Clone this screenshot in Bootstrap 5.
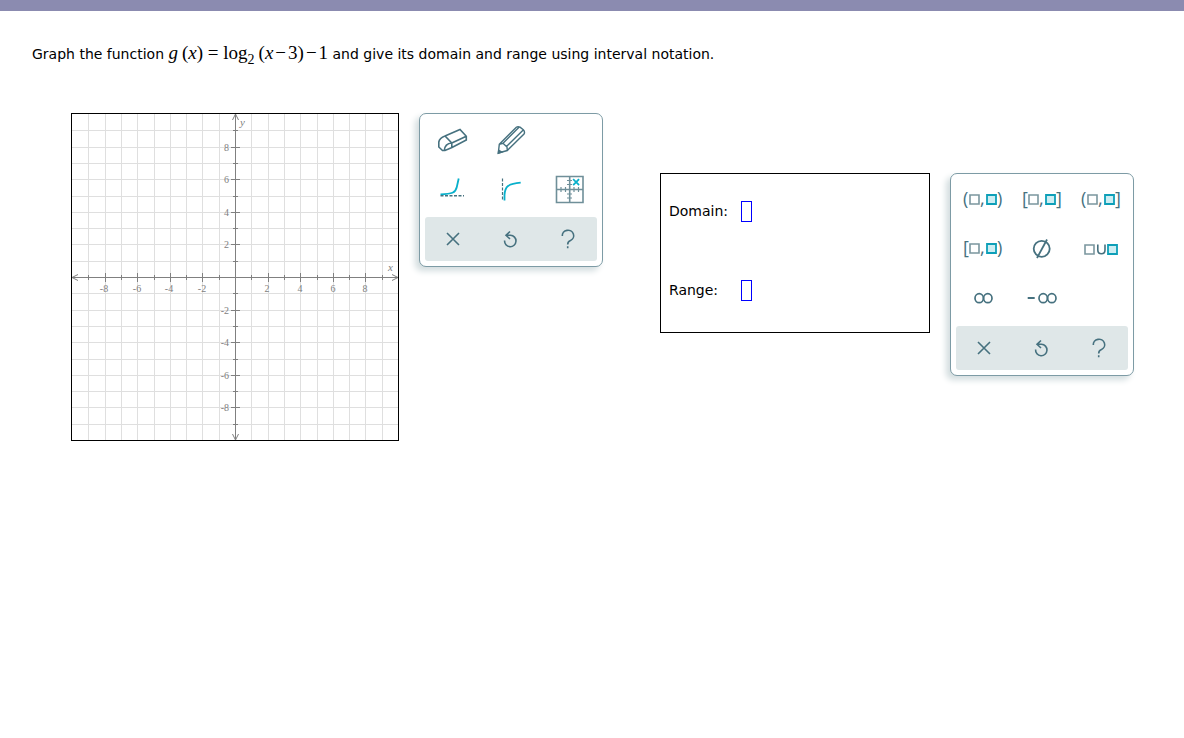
<!DOCTYPE html>
<html lang="en">
<head>
<meta charset="utf-8">
<meta name="viewport" content="width=device-width, initial-scale=1">
<title>Graphing a logarithmic function</title>
<link href="https://cdn.jsdelivr.net/npm/bootstrap@5.3.0/dist/css/bootstrap.min.css" rel="stylesheet">
<style>
  body { font-family: "DejaVu Sans", Verdana, sans-serif; font-size: 14px; line-height: 20px; color: #000; background: #fff; }
  .top-strip { height: 11px; background: #8b8bb0; }
  .question { padding: 28px 32px 0; line-height: 30px; }
  .formula { font-family: "Liberation Serif", "Times New Roman", serif; font-size: 19px; line-height: 20px; white-space: nowrap; }
  .formula sub { font-size: 14px; bottom: -5px; line-height: 0; }
  .minus-sign { margin: 0 2px; }
  .workspace { padding: 44px 50px 40px 71px; gap: 57px; }
  .plot { width: 328px; height: 328px; border: 1px solid #000; }
  .plot text { font: 10px "Liberation Serif", "Times New Roman", serif; fill: #808080; }
  .plot .axis-name { font-size: 11px; font-style: italic; }
  .side-gap { gap: 20px; }
  .answer-side { padding-top: 60px; min-width: 360px; }
  .answer-box { border: 1px solid #000; padding: 27px 8px 31px; gap: 58px; }
  .answer-box label { width: 72px; padding-bottom: 2px; }
  .answer-box input { width: 11px; height: 21px; border: 1px solid #00f; border-radius: 0; padding: 0; font-size: 14px; }
  .answer-row { height: 21px; }
  .tool-panel { width: 184px; border: 1px solid #7d9ba5; border-radius: 7px; padding: 2px 4px 5px; box-shadow: -4px 4px 6px #d3dddf; background: #fff; }
  .tool-grid { display: grid; grid-template-columns: repeat(3, 58px); grid-auto-rows: 49px; }
  .tool-foot { display: grid; grid-template-columns: 56px 58px 58px; grid-auto-rows: 44px; margin: 3px 1px 0; background: #dfe7e8; border-radius: 3px; }
  .tool { border: 0; padding: 0; background: none; }
  .tool svg { display: block; fill: none; stroke: #46717f; stroke-width: 1.6; }
  .tool svg text { font: 18px "Open Sans", sans-serif; fill: #46717f; stroke: none; }
  .tool .blank { stroke: #7b979f; stroke-width: 1.6; }
  .tool .filled { stroke: #0d9fb8; stroke-width: 1.8; fill: #cdeef3; }
  .tool .curve { stroke: #08b0cb; stroke-width: 1.8; }
</style>
</head>
<body>
<header class="top-strip"></header>
<main>
  <p class="question mb-0">Graph the function <span class="formula"><i>g</i><span class="ms-1">(<i>x</i>)</span> = log<sub>2</sub><span class="ms-1">(<i>x</i><span class="minus-sign">−</span>3)<span class="minus-sign">−</span>1</span></span> and give its domain and range using interval notation.</p>

  <div class="workspace d-flex flex-wrap flex-lg-nowrap align-items-start">
    <section class="side-gap d-flex align-items-start flex-shrink-0" aria-label="Graph">
      <div class="plot">
        <svg class="d-block" width="326" height="326" viewBox="1 1 326 326" role="img" aria-label="Coordinate grid">
          <g fill="none" shape-rendering="crispEdges" stroke-width="1">
            <path stroke="#dfdfdf" d="M17.5 0V328M34.5 0V328M50.5 0V328M66.5 0V328M83.5 0V328M99.5 0V328M115.5 0V328M131.5 0V328M148.5 0V328M180.5 0V328M197.5 0V328M213.5 0V328M229.5 0V328M246.5 0V328M262.5 0V328M278.5 0V328M294.5 0V328M311.5 0V328M0 17.5H328M0 34.5H328M0 50.5H328M0 66.5H328M0 83.5H328M0 99.5H328M0 115.5H328M0 131.5H328M0 148.5H328M0 180.5H328M0 197.5H328M0 213.5H328M0 229.5H328M0 246.5H328M0 262.5H328M0 278.5H328M0 294.5H328M0 311.5H328"/>
            <path stroke="#808080" d="M164.5 0V328M0 164.5H328"/>
            <path stroke="#808080" d="M17.5 162v5M50.5 162v5M83.5 162v5M115.5 162v5M148.5 162v5M180.5 162v5M213.5 162v5M246.5 162v5M278.5 162v5M311.5 162v5M34.5 160v9M66.5 160v9M99.5 160v9M131.5 160v9M197.5 160v9M229.5 160v9M262.5 160v9M294.5 160v9"/>
            <path stroke="#808080" d="M162 17.5h5M162 50.5h5M162 83.5h5M162 115.5h5M162 148.5h5M162 180.5h5M162 213.5h5M162 246.5h5M162 278.5h5M162 311.5h5M160 34.5h9M160 66.5h9M160 99.5h9M160 131.5h9M160 197.5h9M160 229.5h9M160 262.5h9M160 294.5h9"/>
          </g>
          <path fill="none" stroke="#808080" d="M161.5 7l3-6 3 6M161.5 321l3 6 3-6M7 161.500l-6 3 6 3M321 161.500l6 3-6 3"/>
          <g text-anchor="middle">
            <text x="33" y="179">-8</text><text x="66" y="179">-6</text><text x="98" y="179">-4</text><text x="131" y="179">-2</text>
            <text x="196" y="179">2</text><text x="229" y="179">4</text><text x="262" y="179">6</text><text x="294" y="179">8</text>
          </g>
          <g text-anchor="end">
            <text x="158" y="38">8</text><text x="158" y="70">6</text><text x="158" y="103">4</text><text x="158" y="135">2</text>
            <text x="158" y="201">-2</text><text x="158" y="233">-4</text><text x="158" y="266">-6</text><text x="158" y="298">-8</text>
          </g>
          <text class="axis-name" x="169" y="13">y</text>
          <text class="axis-name" x="317" y="158">x</text>
        </svg>
      </div>

      <div class="tool-panel">
        <div class="tool-grid">
          <button class="tool" type="button" aria-label="Eraser"><svg width="58" height="49"><path d="M21 20L36 13.500L42.300 20.300V24L28 31.500L21 34.500H18.500L14.800 31V26Q15.500 22 21 20L27.800 27V31.500M27.800 27L42.300 20.300M27.800 27Q20.800 27.500 20.300 34.500"/></svg></button>
          <button class="tool" type="button" aria-label="Pencil"><svg width="58" height="49"><path d="M17.300 28.300L34.300 11.300Q36 10 38 11.200L41.300 13.800Q43.300 16 42 18L25.300 34.500L16.300 37ZM17.300 28.300L21 27.300L25 31L25.300 34.500M21 27.300L37 11.300M24.500 30.500L41 14.200" stroke-width="1.400"/><path fill="#46717f" d="M16.800 34.500l2.700 1.500-3 1z"/></svg></button>
          <span></span>
          <button class="tool" type="button" aria-label="Exponential curve"><svg width="58" height="49"><path class="curve" d="M16.500 29.300C28 29 31.500 28 32.800 22L34.700 13.500"/><path stroke-dasharray="3 1.500" d="M16.500 30.800H40"/></svg></button>
          <button class="tool" type="button" aria-label="Logarithmic curve"><svg width="58" height="49"><path stroke-width="1.200" stroke-dasharray="3 1.500" d="M20.500 13.500V36"/><path class="curve" d="M22.500 35.500V30C23 21.500 26 18.800 38.700 17.700"/></svg></button>
          <button class="tool" type="button" aria-label="Graph point"><svg width="58" height="49"><path stroke="#6f8f99" d="M16.500 11.500H43V37.500H16.500ZM29.700 11.500V37.500M16.500 24.500H43"/><path stroke="#6f8f99" stroke-width="1.200" d="M21 22v5M25.500 22v5M34 22v5M38.500 22v5M27 15.500h5M27 19.500h5M27 29h5M27 33h5"/><path class="curve" stroke-linecap="square" d="M33.800 14.800l4.600 4.600m0-4.600l-4.600 4.600"/></svg></button>
        </div>
        <div class="tool-foot">
          <button class="tool" type="button" aria-label="Clear"><svg width="56" height="44"><path d="M22 16l12 12m0-12L22 28"/></svg></button>
          <button class="tool" type="button" aria-label="Undo"><svg width="58" height="44"><path d="M29 14.500L25 18.300L29 22M25 18.300H29.500A5.700 5.700 0 1 1 23.600 23.500"/></svg></button>
          <button class="tool" type="button" aria-label="Help"><svg width="58" height="44"><path d="M23.300 19A5.700 5.400 0 1 1 31.500 23.500Q28.700 24.300 28.700 27.500M28.700 29.300v2"/></svg></button>
        </div>
      </div>
    </section>

    <section class="answer-side side-gap d-flex align-items-start flex-fill" aria-label="Answer">
      <form class="answer-box d-flex flex-column flex-fill">
        <div class="answer-row d-flex align-items-center"><label for="domain">Domain:</label><input id="domain" type="text"></div>
        <div class="answer-row d-flex align-items-center"><label for="range">Range:</label><input id="range" type="text"></div>
      </form>

      <div class="tool-panel flex-shrink-0">
        <div class="tool-grid">
          <button class="tool" type="button" aria-label="Open interval"><svg width="58" height="49"><text x="8" y="29">(</text><path class="blank" d="M15 19h9v9h-9z"/><text x="25" y="29">,</text><path class="filled" d="M32 19h9v9h-9z"/><text x="42" y="29">)</text></svg></button>
          <button class="tool" type="button" aria-label="Closed interval"><svg width="58" height="49"><text x="9" y="29">[</text><path class="blank" d="M16 19h9v9h-9z"/><text x="26" y="29">,</text><path class="filled" d="M33 19h9v9h-9z"/><text x="43" y="29">]</text></svg></button>
          <button class="tool" type="button" aria-label="Left-open interval"><svg width="58" height="49"><text x="10" y="29">(</text><path class="blank" d="M17 19h9v9h-9z"/><text x="27" y="29">,</text><path class="filled" d="M34 19h9v9h-9z"/><text x="44" y="29">]</text></svg></button>
          <button class="tool" type="button" aria-label="Right-open interval"><svg width="58" height="49"><text x="8" y="29">[</text><path class="blank" d="M15 19h9v9h-9z"/><text x="25" y="29">,</text><path class="filled" d="M32 19h9v9h-9z"/><text x="42" y="29">)</text></svg></button>
          <button class="tool" type="button" aria-label="Empty set"><svg width="58" height="49"><circle cx="28.700" cy="23.800" r="8" stroke-width="1.800"/><path d="M24 33L34 14.500" stroke-width="1.800"/></svg></button>
          <button class="tool" type="button" aria-label="Union"><svg width="58" height="49"><path class="blank" d="M14 20h9v9h-9z"/><path stroke-width="1.600" d="M26.800 19.500V25Q26.800 28.700 30.400 28.700T34 25V19.500"/><path class="filled" d="M37 20h9v9h-9z"/></svg></button>
          <button class="tool" type="button" aria-label="Infinity"><svg width="58" height="49"><ellipse cx="24.200" cy="24.200" rx="4.200" ry="4.500" stroke-width="1.700"/><ellipse cx="32.800" cy="24.200" rx="4.200" ry="4.500" stroke-width="1.700"/></svg></button>
          <button class="tool" type="button" aria-label="Negative infinity"><svg width="58" height="49"><path stroke-width="2" d="M14.700 24h7"/><ellipse cx="30.200" cy="24.200" rx="4.200" ry="4.500" stroke-width="1.700"/><ellipse cx="38.800" cy="24.200" rx="4.200" ry="4.500" stroke-width="1.700"/></svg></button>
        </div>
        <div class="tool-foot">
          <button class="tool" type="button" aria-label="Clear"><svg width="56" height="44"><path d="M22 16l12 12m0-12L22 28"/></svg></button>
          <button class="tool" type="button" aria-label="Undo"><svg width="58" height="44"><path d="M29 14.500L25 18.300L29 22M25 18.300H29.500A5.700 5.700 0 1 1 23.600 23.500"/></svg></button>
          <button class="tool" type="button" aria-label="Help"><svg width="58" height="44"><path d="M23.300 19A5.700 5.400 0 1 1 31.500 23.500Q28.700 24.300 28.700 27.500M28.700 29.300v2"/></svg></button>
        </div>
      </div>
    </section>
  </div>
</main>
<script src="https://cdn.jsdelivr.net/npm/bootstrap@5.3.0/dist/js/bootstrap.bundle.min.js"></script>
</body>
</html>
